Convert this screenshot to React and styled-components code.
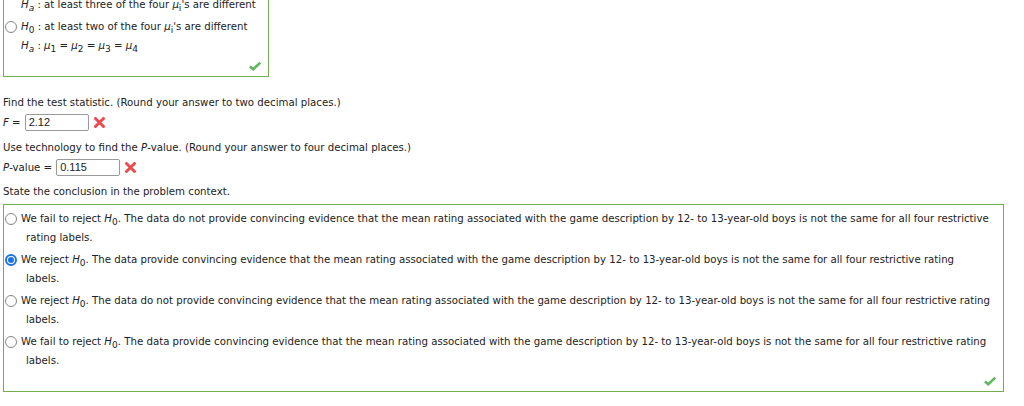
import React from 'react';
import styled, { createGlobalStyle } from 'styled-components';

const Global = createGlobalStyle`
  html, body {
    margin: 0;
    padding: 0;
    background: #fff;
  }
  body {
    font-family: "DejaVu Sans", Verdana, sans-serif;
    font-size: 10.2px;
    color: #222;
    overflow: hidden;
  }
`

const Page = styled.div`
  padding: 0 3px;
  width: 1001px;
`

const AnswerBox = styled.div`
  border: 1px solid #74ad4f;
  width: ${p => p.width || '1001px'};
  margin-top: ${p => p.top || '0'};
  padding: 4px 0 2px 0;
  box-sizing: border-box;
`

const Option = styled.div`
  display: flex;
  align-items: flex-start;
  margin-bottom: 3px;
  line-height: 19px;
`

const RadioCell = styled.div`
  width: 17px;
  flex: none;
  padding-left: 1px;
  padding-top: 4px;
  box-sizing: border-box;
`

const Radio = styled.span`
  width: 12px;
  height: 12px;
  border-radius: 50%;
  box-sizing: border-box;
  border: ${p => (p.checked ? '2px solid #1a73e8' : '1px solid #858585')};
  background: #fff;
  display: flex;
  align-items: center;
  justify-content: center;
  &::after {
    content: '';
    display: ${p => (p.checked ? 'block' : 'none')};
    width: 6px;
    height: 6px;
    border-radius: 50%;
    background: #1a73e8;
  }
`

const OptionText = styled.div`
  padding-left: 5px;
  text-indent: -5px;
  flex: 1;
  padding-right: ${p => p.right || '12.8px'};
`

const Var = styled.i`
  font-style: italic;
`

const Sub = styled.sub`
  font-size: 9px;
  vertical-align: -3px;
  line-height: 0;
`

const CheckRow = styled.div`
  display: flex;
  justify-content: flex-end;
  padding-right: 6px;
  height: 16px;
  align-items: center;
`

const Prompt = styled.div`
  line-height: 16px;
  margin-top: ${p => p.top || '0'};
`

const AnswerRow = styled.div`
  display: flex;
  align-items: center;
  height: 19px;
  margin-top: 2px;
`

const Label = styled.span`
  margin-right: 4px;
`

const Field = styled.div`
  width: 64px;
  height: 17px;
  box-sizing: border-box;
  border: 1px solid #9a9a9a;
  border-radius: 2px;
  font-family: "Liberation Sans", Arial, sans-serif;
  font-size: 11px;
  line-height: 15px;
  padding-left: 3px;
  color: #222;
  margin-right: 5px;
`

const Check = () => (
  <svg width="14" height="11" viewBox="0 0 14 11">
    <path d="M1 6.2 L2.8 4.4 L5.2 6.6 L11.4 0.8 L13.2 2.6 L5.2 10 Z" fill="#5cb85c" />
  </svg>
)

const Cross = () => (
  <svg width="11" height="11" viewBox="0 0 11 11">
    <path d="M1.5 1.5 L9.5 9.5 M9.5 1.5 L1.5 9.5" stroke="#e94b4f" strokeWidth="3" strokeLinecap="round" />
  </svg>
)

const H0 = () => (
  <>
    <Var>H</Var>
    <Sub>0</Sub>
  </>
)

const Ha = () => (
  <>
    <Var>H</Var>
    <Sub>
      <i>a</i>
    </Sub>
  </>
)

const Mu = ({ n }) => (
  <>
    <Var>μ</Var>
    <Sub>{n}</Sub>
  </>
)

const MuI = () => (
  <>
    <Var>μ</Var>
    <Sub>i</Sub>
  </>
)

const AllEqual = () => (
  <>
    <Mu n="1" /> = <Mu n="2" /> = <Mu n="3" /> = <Mu n="4" />
  </>
)

const rest = 'the mean rating associated with the game description by 12- to 13-year-old boys is not the same for all four restrictive rating labels.'

const conclusions = [
  { pre: 'We fail to reject', post: `The data do not provide convincing evidence that ${rest}` },
  { pre: 'We reject', post: `The data provide convincing evidence that ${rest}`, checked: true },
  { pre: 'We reject', post: `The data do not provide convincing evidence that ${rest}` },
  { pre: 'We fail to reject', post: `The data provide convincing evidence that ${rest}` },
]

export default function App() {
  return (
    <Page>
      <Global />
      <AnswerBox width="266px" top="-29px">
        <Option>
          <RadioCell>
            <Radio />
          </RadioCell>
          <OptionText right="2px">
            <div>
              <H0 /> : <AllEqual />
            </div>
            <div>
              <Ha /> : at least three of the four <MuI />'s are different
            </div>
          </OptionText>
        </Option>
        <Option>
          <RadioCell>
            <Radio />
          </RadioCell>
          <OptionText right="2px">
            <div>
              <H0 /> : at least two of the four <MuI />'s are different
            </div>
            <div>
              <Ha /> : <AllEqual />
            </div>
          </OptionText>
        </Option>
        <CheckRow>
          <Check />
        </CheckRow>
      </AnswerBox>

      <Prompt top="18px">Find the test statistic. (Round your answer to two decimal places.)</Prompt>
      <AnswerRow>
        <Label>
          <Var>F</Var> =
        </Label>
        <Field>2.12</Field>
        <Cross />
      </AnswerRow>

      <Prompt top="8px">
        Use technology to find the <Var>P</Var>-value. (Round your answer to four decimal places.)
      </Prompt>
      <AnswerRow>
        <Label>
          <Var>P</Var>-value =
        </Label>
        <Field>0.115</Field>
        <Cross />
      </AnswerRow>

      <Prompt top="7px">State the conclusion in the problem context.</Prompt>

      <AnswerBox top="4px">
        {conclusions.map((c, i) => (
          <Option key={i}>
            <RadioCell>
              <Radio checked={c.checked} />
            </RadioCell>
            <OptionText>
              {c.pre} <H0 />. {c.post}
            </OptionText>
          </Option>
        ))}
        <CheckRow>
          <Check />
        </CheckRow>
      </AnswerBox>
    </Page>
  )
}
